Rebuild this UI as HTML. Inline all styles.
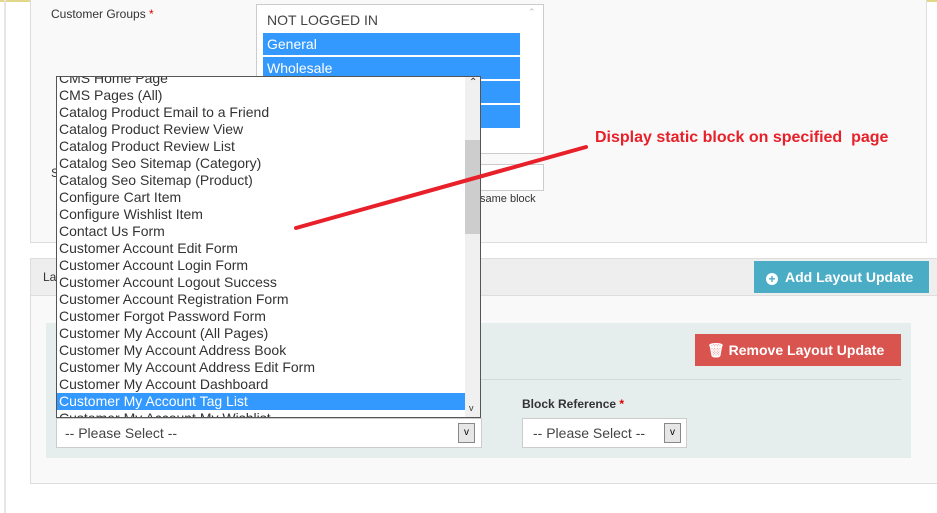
<!DOCTYPE html>
<html><head><style>
*{box-sizing:border-box;margin:0;padding:0}
body{width:937px;height:513px;position:relative;overflow:hidden;background:#fff;font-family:"Liberation Sans",Arial,sans-serif;}
.a{position:absolute}
.it{height:17px;line-height:17px;font-size:14px;color:#333;padding-left:2px;white-space:nowrap}
.sel{background:#3399ff;color:#fff}
</style></head><body>
<div class="a" style="left:0;top:0;width:937px;height:2px;background:#e3d78a"></div>
<div class="a" style="left:4px;top:0;width:2px;height:513px;background:#e6e6e6"></div>
<div class="a" style="left:30px;top:0;width:897px;height:243px;background:#f9f9f9;border:1px solid #ddd;border-top:none"></div>
<div class="a" style="left:51px;top:7px;font-size:12px;color:#333">Customer Groups <span style="color:#d00">*</span></div>
<div class="a" style="left:51px;top:166px;font-size:12px;color:#333">S</div>
<div class="a" style="left:256px;top:4px;width:288px;height:150px;background:#fff;border:1px solid #ccc"></div>
<div class="a" style="left:262px;top:10px;font-size:14px;color:#444;padding-left:5px;line-height:20px">NOT LOGGED IN</div>
<div class="a" style="left:263px;top:33px;width:257px;height:22px;background:#3399ff;color:#fff;font-size:14px;line-height:22px;padding-left:4px">General</div>
<div class="a" style="left:263px;top:57px;width:257px;height:22px;background:#3399ff;color:#fff;font-size:14px;line-height:22px;padding-left:4px">Wholesale</div>
<div class="a" style="left:263px;top:81px;width:257px;height:22px;background:#3399ff"></div>
<div class="a" style="left:263px;top:105px;width:257px;height:23px;background:#3399ff"></div>
<div class="a" style="left:528px;top:7px;font-size:9px;color:#bbb">&#8963;</div>
<div class="a" style="left:480px;top:164px;width:64px;height:27px;background:#fff;border:1px solid #ccc;border-left:none"></div>
<div class="a" style="left:480px;top:193px;font-size:11px;color:#333">same block</div>
<div class="a" style="left:30px;top:258px;width:910px;height:226px;background:#f9f9f9;border:1px solid #ddd"></div>
<div class="a" style="left:31px;top:259px;width:906px;height:37px;background:#eee;border-bottom:1px solid #ddd"></div>
<div class="a" style="left:43px;top:270px;font-size:12px;color:#333">La</div>
<div class="a" style="left:754px;top:261px;width:175px;height:32px;background:#4bacc6;color:#fff;font-size:14px;font-weight:bold;line-height:32px;padding-left:12px"><span style="display:inline-block;width:12px;height:12px;border-radius:50%;background:#fff;color:#4bacc6;font-size:12px;line-height:12px;text-align:center;vertical-align:-1px;margin-right:7px">+</span>Add Layout Update</div>
<div class="a" style="left:46px;top:323px;width:865px;height:135px;background:#e6eeed"></div>
<div class="a" style="left:695px;top:334px;width:206px;height:32px;background:#d9534f;color:#fff;font-size:14px;font-weight:bold;line-height:32px;padding-left:12px">&#128465; Remove Layout Update</div>
<div class="a" style="left:56px;top:379px;width:845px;height:1px;background:#d3d9d9"></div>
<div class="a" style="left:522px;top:397px;font-size:12px;font-weight:bold;color:#333">Block Reference <span style="color:#d00">*</span></div>
<div class="a" style="left:56px;top:418px;width:426px;height:30px;background:#fff;border:1px solid #ccc;font-size:14px;color:#444;line-height:28px;padding-left:8px">-- Please Select --</div>
<div class="a" style="left:458px;top:423px;width:17px;height:20px;background:#e6e6e6;border:1px solid #888;font-size:10px;text-align:center;line-height:18px">v</div>
<div class="a" style="left:522px;top:418px;width:165px;height:30px;background:#fff;border:1px solid #ccc;font-size:14px;color:#444;line-height:28px;padding-left:10px">-- Please Select --</div>
<div class="a" style="left:664px;top:423px;width:17px;height:20px;background:#e6e6e6;border:1px solid #888;font-size:10px;text-align:center;line-height:18px">v</div>
<div class="a" style="left:56px;top:76px;width:425px;height:342px;background:#fff;border:1px solid #555;overflow:hidden">
<div class="a" style="left:0;top:-7px;width:408px">
<div class="it">CMS Home Page</div><div class="it">CMS Pages (All)</div><div class="it">Catalog Product Email to a Friend</div><div class="it">Catalog Product Review View</div><div class="it">Catalog Product Review List</div><div class="it">Catalog Seo Sitemap (Category)</div><div class="it">Catalog Seo Sitemap (Product)</div><div class="it">Configure Cart Item</div><div class="it">Configure Wishlist Item</div><div class="it">Contact Us Form</div><div class="it">Customer Account Edit Form</div><div class="it">Customer Account Login Form</div><div class="it">Customer Account Logout Success</div><div class="it">Customer Account Registration Form</div><div class="it">Customer Forgot Password Form</div><div class="it">Customer My Account (All Pages)</div><div class="it">Customer My Account Address Book</div><div class="it">Customer My Account Address Edit Form</div><div class="it">Customer My Account Dashboard</div><div class="it sel">Customer My Account Tag List</div><div class="it">Customer My Account My Wishlist</div>
</div>
<div class="a" style="left:408px;top:0;width:16px;height:340px;background:#f0f0f0"></div>
<div class="a" style="left:408px;top:63px;width:16px;height:94px;background:#cdcdcd"></div>
<div class="a" style="left:412px;top:0;font-size:10px;color:#333">&#8963;</div>
<div class="a" style="left:412px;top:326px;font-size:9px;color:#333">v</div>
</div>
<svg class="a" style="left:0;top:0" width="937" height="513"><line x1="296" y1="228" x2="586" y2="147" stroke="#e8202a" stroke-width="4" stroke-linecap="round"/></svg>
<div class="a" style="left:595px;top:129px;font-size:16px;font-weight:bold;color:#e8202a;white-space:pre">Display static block on specified  page</div>
</body></html>
